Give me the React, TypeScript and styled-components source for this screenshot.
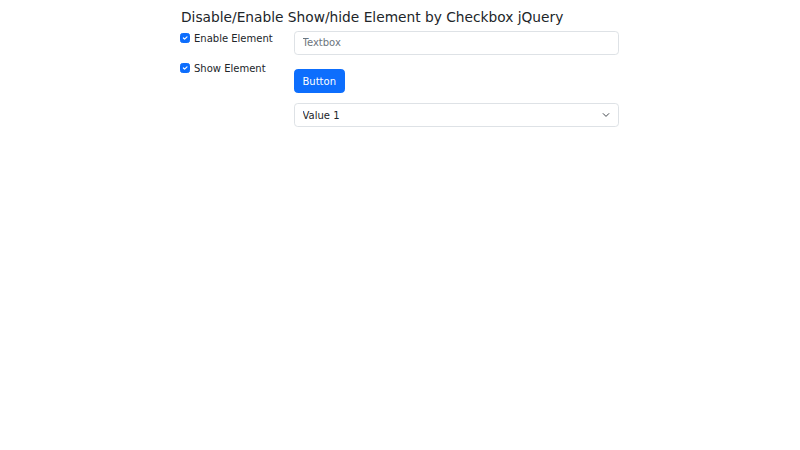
import React from 'react';
import styled, { createGlobalStyle } from 'styled-components';

const GlobalStyle = createGlobalStyle`
  html, body {
    margin: 0;
    padding: 0;
    background: #ffffff;
  }
  body {
    font-family: 'DejaVu Sans', 'Liberation Sans', sans-serif;
    font-size: 10px;
    line-height: 1.5;
    color: #212529;
  }
  * {
    box-sizing: border-box;
  }
`;

const Page = styled.div`
  width: 440px;
  margin: 0 auto;
  padding-top: 9px;
`;

const Title = styled.h4`
  margin: 0 0 5px 0;
  font-size: 13.75px;
  font-weight: 500;
  line-height: 1.2;
  padding-left: 1px;
`;

const Layout = styled.div`
  display: grid;
  grid-template-columns: 114px 1fr;
`;

const Checks = styled.div`
  display: flex;
  flex-direction: column;
  gap: 15px;
`;

const CheckRow = styled.label`
  display: flex;
  align-items: flex-start;
  min-height: 15px;
  padding-left: 14px;
  position: relative;
  cursor: pointer;
`;

const CheckBox = styled.span<{ checked?: boolean }>`
  position: absolute;
  left: 0;
  top: 2.5px;
  width: 10px;
  height: 10px;
  border-radius: 2.5px;
  background: ${(p) => (p.checked ? '#0d6efd' : '#ffffff')};
  border: 1px solid ${(p) => (p.checked ? '#0d6efd' : '#dee2e6')};
  display: flex;
  align-items: center;
  justify-content: center;

  svg {
    width: 10px;
    height: 10px;
  }
`;

const Controls = styled.div`
  display: flex;
  flex-direction: column;
  align-items: flex-start;
  padding-right: 1.5px;
`;

const TextInput = styled.input`
  display: block;
  width: 100%;
  height: 24px;
  padding: 3.75px 7.5px;
  font: inherit;
  font-size: 10px;
  color: #212529;
  background: #ffffff;
  border: 1px solid #dee2e6;
  border-radius: 3.75px;
  margin-bottom: 14.5px;
  outline: none;

  &::placeholder {
    color: #6c757d;
  }
`;

const Button = styled.button`
  height: 24px;
  padding: 3.75px 7.5px;
  font: inherit;
  font-size: 10px;
  line-height: 1.5;
  color: #ffffff;
  background: #0d6efd;
  border: 1px solid #0d6efd;
  border-radius: 3.75px;
  margin-bottom: 10px;
  cursor: pointer;
`;

const SelectWrap = styled.div`
  position: relative;
  width: 100%;
`;

const Select = styled.select`
  display: block;
  width: 100%;
  height: 24px;
  padding: 3.75px 22.5px 3.75px 7.5px;
  font: inherit;
  font-size: 10px;
  color: #212529;
  background: #ffffff;
  border: 1px solid #dee2e6;
  border-radius: 3.75px;
  appearance: none;
  -webkit-appearance: none;
  outline: none;
`;

const Chevron = styled.svg`
  position: absolute;
  right: 7.5px;
  top: 50%;
  width: 10px;
  height: 7.5px;
  transform: translateY(-50%);
  pointer-events: none;
`;

const Tick = () => (
  <svg viewBox="0 0 20 20">
    <path
      d="M6 10l3 3l6-6"
      fill="none"
      stroke="#ffffff"
      strokeWidth="3"
      strokeLinecap="round"
      strokeLinejoin="round"
    />
  </svg>
);

const Checkbox: React.FC<{ label: string; checked: boolean }> = ({ label, checked }) => (
  <CheckRow>
    <CheckBox checked={checked}>{checked && <Tick />}</CheckBox>
    {label}
  </CheckRow>
);

export default function App() {
  return (
    <>
      <GlobalStyle />
      <Page>
        <Title>Disable/Enable Show/hide Element by Checkbox jQuery</Title>
        <Layout>
          <Checks>
            <Checkbox label="Enable Element" checked />
            <Checkbox label="Show Element" checked />
          </Checks>
          <Controls>
            <TextInput type="text" placeholder="Textbox" />
            <Button type="button">Button</Button>
            <SelectWrap>
              <Select defaultValue="1">
                <option value="1">Value 1</option>
                <option value="2">Value 2</option>
                <option value="3">Value 3</option>
              </Select>
              <Chevron viewBox="0 0 16 16">
                <path
                  d="m2 5 6 6 6-6"
                  fill="none"
                  stroke="#343a40"
                  strokeWidth="2"
                  strokeLinecap="round"
                  strokeLinejoin="round"
                />
              </Chevron>
            </SelectWrap>
          </Controls>
        </Layout>
      </Page>
    </>
  );
}
